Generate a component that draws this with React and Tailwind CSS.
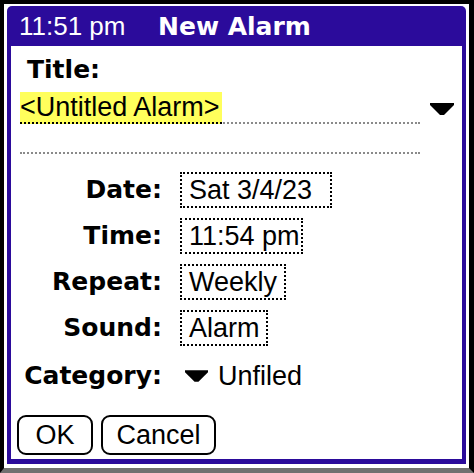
const palmBold = "font-['DejaVu_Sans',sans-serif] font-bold text-[25px]";
const palmText = "font-['Liberation_Sans',Arial,sans-serif] text-[27px]";

// Small filled pop-up arrow used by the title and category pickers
const PopArrow = ({ className }) => (
  <svg viewBox="0 0 24 12" className={className} aria-hidden="true">
    <polygon points="0,0 24,0 24,2 14,12 10,12 0,2" fill="black" />
  </svg>
);

const fields = [
  { label: "Date:", value: "Sat 3/4/23", width: "w-[152px]" },
  { label: "Time:", value: "11:54 pm", width: "w-[123px]" },
  { label: "Repeat:", value: "Weekly", width: "w-[106px]" },
  { label: "Sound:", value: "Alarm", width: "w-[88px]" },
];

export default function App() {
  return (
    <div className="w-[474px] h-[473px] bg-white border-l-4 border-t-4 border-r-[5px] border-b-[5px] border-l-black border-t-black border-r-black border-b-[#707070] pt-[2px] pl-[3px] pr-[3px] pb-[4px]">
      <div className="h-full flex flex-col bg-[#2b0b9b] rounded-t-[5px] px-[4px] pb-[5px]">
        {/* Title bar */}
        <div className="h-[40px] flex items-center pl-2 text-white">
          <span className="font-['Liberation_Sans',Arial,sans-serif] text-[26px] w-[139px] leading-none">11:51 pm</span>
          <span className={`${palmBold} leading-none`}>New Alarm</span>
        </div>

        {/* Form body */}
        <div className="flex-1 bg-white pt-[9px] text-black">
          <div className={`${palmBold} h-[30px] leading-[30px] pl-4`}>Title:</div>

          <div className="flex items-start pl-[9px] mt-[7px] h-[32px]">
            <div className="w-[400px] h-[32px] border-b-2 border-dotted border-[#8a8a8a]">
              <span className={`${palmText} inline-block h-[32px] leading-[30px] bg-[#ffff5c] border-b-2 border-dotted border-black pr-[2px]`}>
                &lt;Untitled Alarm&gt;
              </span>
            </div>
            <PopArrow className="w-[24px] h-[12px] ml-[10px] mt-[11px]" />
          </div>

          <div className="ml-[9px] w-[400px] mt-[28px] border-b-2 border-dotted border-[#8a8a8a]" />

          <div className="mt-[18px] flex flex-col gap-[10px]">
            {fields.map((f) => (
              <div key={f.label} className="flex items-center h-[36px]">
                <span className={`${palmBold} w-[151px] text-right`}>{f.label}</span>
                <span
                  className={`${palmText} ${f.width} ml-[18px] h-[36px] flex items-center px-[7px] border-2 border-dotted border-black leading-none whitespace-nowrap`}
                >
                  {f.value}
                </span>
              </div>
            ))}
            <div className="flex items-center h-[36px] mt-[2px]">
              <span className={`${palmBold} w-[151px] text-right`}>Category:</span>
              <PopArrow className="w-[23px] h-[12px] ml-[23px]" />
              <span className={`${palmText} ml-[10px] leading-none`}>Unfiled</span>
            </div>
          </div>

          <div className="flex gap-[8px] pl-[6px] mt-[21px]">
            <button className={`${palmText} w-[76px] h-[40px] border-2 border-black rounded-[9px] leading-none`}>
              OK
            </button>
            <button className={`${palmText} w-[115px] h-[40px] border-2 border-black rounded-[9px] leading-none`}>
              Cancel
            </button>
          </div>
        </div>
      </div>
    </div>
  );
}
